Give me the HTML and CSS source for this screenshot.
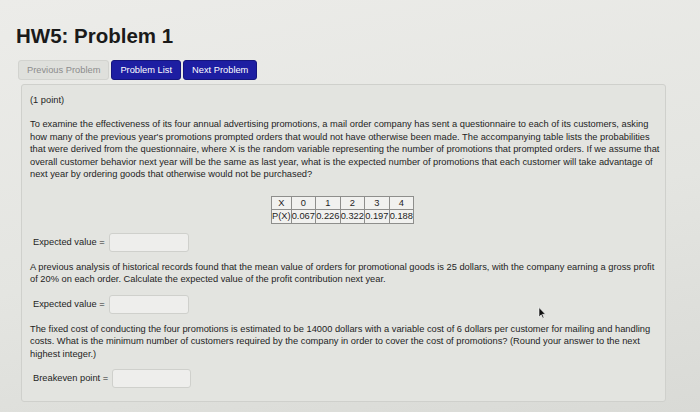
FILE: index.html
```html
<!DOCTYPE html>
<html lang="en">
<head>
<meta charset="utf-8">
<title>HW5: Problem 1</title>
<link rel="stylesheet" href="styles.css">
</head>
<body>
<div class="page">
  <h1 class="title">HW5: Problem 1</h1>
  <div class="nav">
    <span class="btn btn-disabled">Previous Problem</span>
    <span class="btn btn-primary">Problem List</span>
    <span class="btn btn-primary">Next Problem</span>
  </div>
  <div class="panel">
    <p class="points">(1 point)</p>
    <p class="para para-first">To examine the effectiveness of its four annual advertising promotions, a mail order company has sent a questionnaire to each of its customers, asking how many of the previous year's promotions prompted orders that would not have otherwise been made. The accompanying table lists the probabilities that were derived from the questionnaire, where X is the random variable representing the number of promotions that prompted orders. If we assume that overall customer behavior next year will be the same as last year, what is the expected number of promotions that each customer will take advantage of next year by ordering goods that otherwise would not be purchased?</p>
    <div class="table-wrap">
      <table class="prob">
        <tr><td class="hd">X</td><td>0</td><td>1</td><td>2</td><td>3</td><td>4</td></tr>
        <tr><td class="hd">P(X)</td><td>0.067</td><td>0.226</td><td>0.322</td><td>0.197</td><td>0.188</td></tr>
      </table>
    </div>
    <div class="answer"><span class="label">Expected value =</span><span class="input"></span></div>
    <p class="para">A previous analysis of historical records found that the mean value of orders for promotional goods is 25 dollars, with the company earning a gross profit of 20% on each order. Calculate the expected value of the profit contribution next year.</p>
    <div class="answer"><span class="label">Expected value =</span><span class="input"></span></div>
    <p class="para">The fixed cost of conducting the four promotions is estimated to be 14000 dollars with a variable cost of 6 dollars per customer for mailing and handling costs. What is the minimum number of customers required by the company in order to cover the cost of promotions? (Round your answer to the next highest integer.)</p>
    <div class="answer"><span class="label">Breakeven point =</span><span class="input input-wide"></span></div>
    <svg class="cursor" width="8" height="12" viewBox="0 0 8 12"><path d="M1 0.5 L1 10 L3.2 7.8 L4.8 11.2 L6 10.6 L4.5 7.3 L7.5 7.3 Z" fill="#111" stroke="#fff" stroke-width="0.6"/></svg>
  </div>
</div>
</body>
</html>
```

FILE: styles.css
```css
html, body {
  margin: 0;
  padding: 0;
}
body {
  width: 700px;
  height: 412px;
  overflow: hidden;
  background: linear-gradient(170deg, #ecece9 0%, #e4e5e1 55%, #d9dad6 100%);
  font-family: "Liberation Sans", Arial, Helvetica, sans-serif;
  color: #1e1e1e;
}
.page {
  padding: 24px 0 0 16px;
}
.title {
  margin: 0;
  font-size: 20.5px;
  line-height: 24px;
  font-weight: bold;
  color: #1a1a1a;
}
.nav {
  display: flex;
  gap: 2px;
  margin: 12px 0 0 2px;
}
.btn {
  display: flex;
  align-items: center;
  height: 20px;
  box-sizing: border-box;
  padding: 0 8px;
  font-size: 9.3px;
  border-radius: 3px;
  border: 1px solid transparent;
}
.btn-disabled {
  background: #dfe0dc;
  border-color: #d2d3cf;
  color: #8c8c8c;
}
.btn-primary {
  background: #1d1ea2;
  border-color: #14157e;
  color: #fff;
}
.panel {
  position: relative;
  margin: 4px 0 0 5px;
  width: 645px;
  box-sizing: border-box;
  padding: 9px 4px 13px 8px;
  background: #e3e4e0;
  border: 1px solid #cfd0cc;
  border-radius: 3px;
  font-size: 9.3px;
  line-height: 12.5px;
}
.points {
  margin: 0;
}
.para {
  margin: 9px 0 0 0;
}
.para-first {
  margin-top: 11.5px;
}
.table-wrap {
  display: flex;
  justify-content: center;
  margin-top: 15px;
  padding-right: 6px;
}
.prob {
  border-collapse: collapse;
  background: #f1f1ef;
  font-size: 9.3px;
  line-height: 12.5px;
}
.prob td {
  border: 1px solid #8e8e8c;
  padding: 0;
  width: 23.5px;
  text-align: center;
}
.prob td.hd {
  width: 17px;
}
.answer {
  display: flex;
  align-items: center;
  gap: 4px;
  margin: 9px 0 0 3px;
}
.input {
  display: block;
  width: 80px;
  height: 19px;
  box-sizing: border-box;
  background: #eeeeec;
  border: 1px solid #cfd0cc;
  border-radius: 3px;
}
.input-wide {
  width: 79px;
}
.cursor {
  position: absolute;
  left: 516px;
  top: 222px;
}
```
